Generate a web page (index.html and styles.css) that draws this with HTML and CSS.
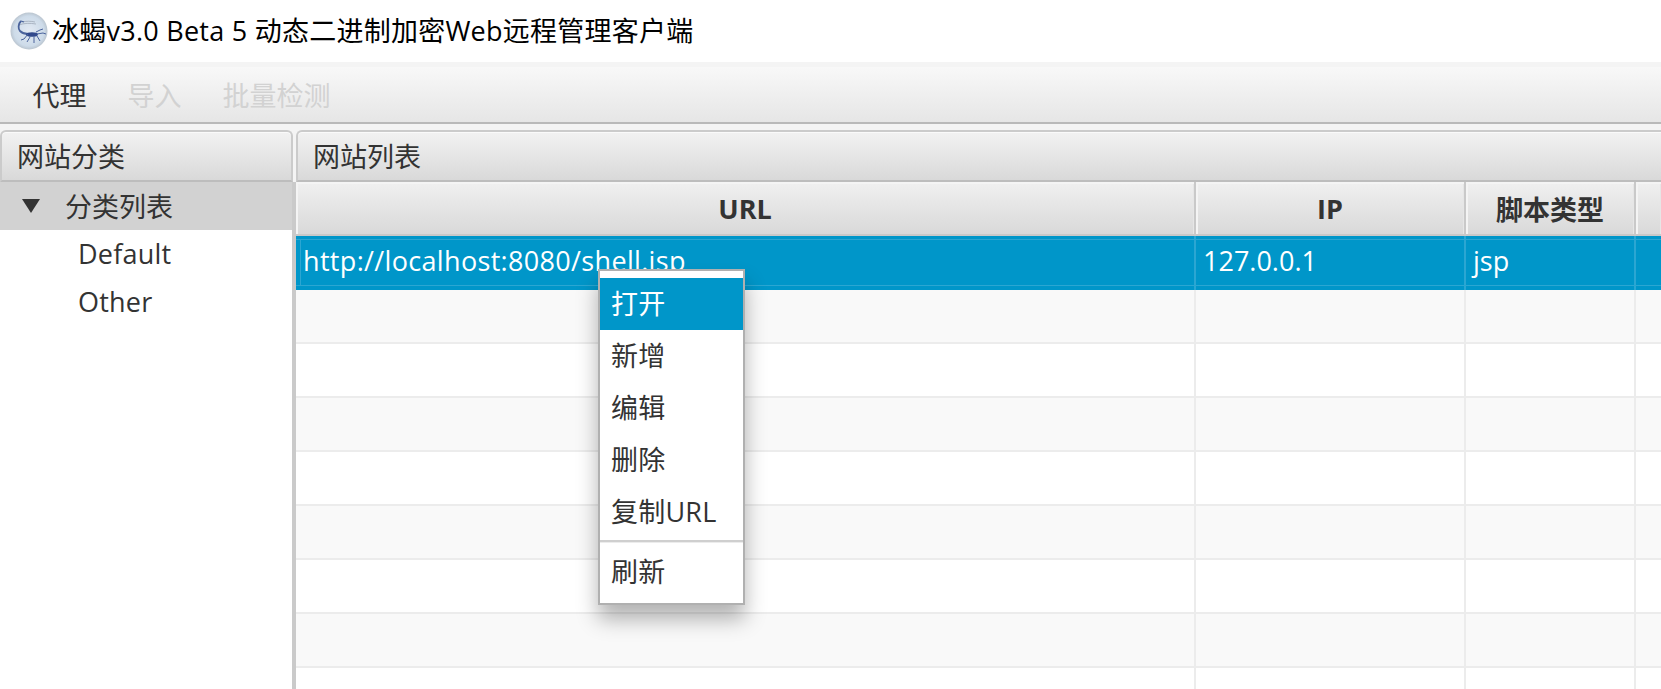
FILE: index.html
```html
<!DOCTYPE html>
<html lang="zh">
<head>
<meta charset="utf-8">
<title>冰蝎</title>
<link rel="stylesheet" href="styles.css">
</head>
<body>
<div class="app">
  <header class="titlebar">
    <svg class="logo" viewBox="0 0 38 38" aria-hidden="true">
      <defs>
        <radialGradient id="lg" cx="50%" cy="50%" r="52%">
          <stop offset="0" stop-color="#e3eaf3"/>
          <stop offset="0.78" stop-color="#cddbe9"/>
          <stop offset="1" stop-color="#b6c0ca"/>
        </radialGradient>
      </defs>
      <circle cx="19" cy="19" r="18.5" fill="url(#lg)"/>
      <path d="M9 13c5-2 11-2 17-1M12 10c4-1 9-1 13 0" stroke="#98a2b0" stroke-width="0.7" fill="none"/>
      <path d="M11 9c-3 3-3 8-1 10 2 2 5 3 8 3" stroke="#4a639c" stroke-width="1.8" fill="none"/>
      <path d="M11 9l3 1" stroke="#4a639c" stroke-width="1.1" fill="none"/>
      <ellipse cx="22" cy="22.5" rx="6" ry="2.3" fill="#31498c"/>
      <path d="M27 22l6-1 3 1M26 20l4-2 3-1M20 25l-3 5M24 25l0 6M27 24l3 5M18 22l-4 5-3 1" stroke="#4a639c" stroke-width="1" fill="none"/>
    </svg>
    <span class="app-title">冰蝎v3.0 Beta 5 动态二进制加密Web远程管理客户端</span>
  </header>

  <nav class="menubar">
    <span class="menu">代理</span>
    <span class="menu menu-off">导入</span>
    <span class="menu menu-off">批量检测</span>
  </nav>

  <main class="panes">
    <section class="pane pane-left">
      <div class="pane-head">网站分类</div>
      <div class="tree">
        <div class="tree-row tree-root"><span class="arrow"></span>分类列表</div>
        <div class="tree-row tree-leaf">Default</div>
        <div class="tree-row tree-leaf">Other</div>
      </div>
    </section>

    <section class="pane pane-right">
      <div class="pane-head pane-head-right">网站列表</div>
      <div class="table">
        <div class="thead">
          <div class="th c-url">URL</div>
          <div class="th c-ip">IP</div>
          <div class="th c-type">脚本类型</div>
          <div class="th c-rest"></div>
        </div>
        <div class="tr tr-sel">
          <div class="td c-url">http://localhost:8080/shell.jsp</div>
          <div class="td c-ip">127.0.0.1</div>
          <div class="td c-type">jsp</div>
          <div class="td c-rest"></div>
        </div>
        <div class="tr tr-odd"><div class="td c-url"></div><div class="td c-ip"></div><div class="td c-type"></div><div class="td c-rest"></div></div>
        <div class="tr"><div class="td c-url"></div><div class="td c-ip"></div><div class="td c-type"></div><div class="td c-rest"></div></div>
        <div class="tr tr-odd"><div class="td c-url"></div><div class="td c-ip"></div><div class="td c-type"></div><div class="td c-rest"></div></div>
        <div class="tr"><div class="td c-url"></div><div class="td c-ip"></div><div class="td c-type"></div><div class="td c-rest"></div></div>
        <div class="tr tr-odd"><div class="td c-url"></div><div class="td c-ip"></div><div class="td c-type"></div><div class="td c-rest"></div></div>
        <div class="tr"><div class="td c-url"></div><div class="td c-ip"></div><div class="td c-type"></div><div class="td c-rest"></div></div>
        <div class="tr tr-odd"><div class="td c-url"></div><div class="td c-ip"></div><div class="td c-type"></div><div class="td c-rest"></div></div>
        <div class="tr"><div class="td c-url"></div><div class="td c-ip"></div><div class="td c-type"></div><div class="td c-rest"></div></div>
      </div>
    </section>
  </main>

  <div class="ctx">
    <div class="ctx-item ctx-active">打开</div>
    <div class="ctx-item">新增</div>
    <div class="ctx-item">编辑</div>
    <div class="ctx-item">删除</div>
    <div class="ctx-item">复制URL</div>
    <div class="ctx-sep"></div>
    <div class="ctx-item ctx-last">刷新</div>
  </div>
</div>
</body>
</html>
```
FILE: styles.css
```css
* { box-sizing: border-box; }
html, body { margin: 0; height: 100%; overflow: hidden; background: #f4f4f4; }
body {
  font-family: "Open Sans", "Noto Sans CJK SC", sans-serif;
  font-size: 27px;
  color: #333;
}
.app { position: relative; width: 1661px; height: 689px; display: flex; flex-direction: column; overflow: hidden; }

.titlebar { height: 62px; background: #fff; display: flex; align-items: center; padding: 0 0 3px 10px; color: #000; flex: none; }
.logo { width: 38px; height: 38px; margin: 3px 4px 0 0; flex: none; }
.app-title { letter-spacing: 0.25px; white-space: nowrap; }

.menubar {
  margin-top: 5px; height: 57px; flex: none;
  padding: 0 0 1px 12px;
  display: flex; align-items: center;
  background: linear-gradient(#f8f8f8, #e6e6e6);
  border-bottom: 2px solid #b9b9b9;
}
.menu { padding: 0 20.5px; color: #333; }
.menu-off { color: #d2d2d2; }

.panes { flex: 1; display: flex; margin-top: 6px; min-height: 0; }
.pane { display: flex; flex-direction: column; min-height: 0; }
.pane-left { width: 296px; flex: none; }
.pane-right { flex: 1; min-width: 0; }

.pane-head {
  height: 52px; flex: none;
  display: flex; align-items: center;
  padding: 0 0 2px 15px;
  background: linear-gradient(#f2f2f2, #d9d9d9);
  border: 2px solid #cbcbcb;
  border-bottom: 2px solid #bdbdbd;
  border-radius: 6px 6px 0 0;
  box-shadow: inset 0 1px 0 #fafafa;
}
.pane-left .pane-head { width: 293px; }
.pane-head-right { border-right: 0; padding-left: 15px; border-radius: 6px 0 0 0; }

.tree { flex: 1; background: #fff; border-right: 4px solid #cacaca; }
.tree-row { height: 48px; display: flex; align-items: center; padding-bottom: 2px; }
.tree-root { background: #d2d2d2; padding-left: 22px; }
.arrow { width: 0; height: 0; border-left: 9px solid transparent; border-right: 9px solid transparent; border-top: 14px solid #333; margin: 2px 25px 0 0; }
.tree-leaf { padding-left: 78px; letter-spacing: 0.2px; }

.table { flex: 1; background: #fff; min-height: 0; }
.thead { height: 54px; display: flex; background: linear-gradient(#f0f0f0, #d9d9d9); border-bottom: 2px solid #c9c9c9; }
.th { display: flex; align-items: center; justify-content: center; font-weight: 700; border-right: 2px solid #c9c9c9; box-shadow: inset 2px 2px 0 #f4f4f4, inset -1px 0 0 #e6e6e6; }
.c-url { width: 900px; flex: none; }
.c-ip { width: 270px; flex: none; }
.c-type { width: 170px; flex: none; }
.c-rest { flex: 1; }
.th.c-rest { border-right: 0; }

.tr { height: 54px; display: flex; background: #fff; border-bottom: 2px solid #ececec; }
.tr-odd { background: #f9f9f9; }
.td { display: flex; align-items: center; padding: 0 0 5px 7px; border-right: 2px solid #ececec; white-space: nowrap; }
.td.c-rest { border-right: 0; }
.tr-sel { background: #0096c9; color: #fff; height: 54px; border: 0; box-shadow: inset 0 3px 0 #0096c9, inset 0 4px 0 #2ba6d2, inset 0 -4px 0 #0096c9, inset 0 -5px 0 #2ba6d2, inset 4px 0 0 #0096c9, inset 5px 0 0 #2ba6d2; }
.tr-sel .td { border-right-color: #2ba6d2; }
.tr-sel .c-url { letter-spacing: 0.33px; }

.ctx {
  position: absolute; left: 598px; top: 269px; width: 147px;
  background: #fff; border: 2px solid #b0b0b0;
  padding-top: 7px;
  box-shadow: 0 14px 20px rgba(0, 0, 0, 0.3);
}
.ctx-item { height: 52px; padding: 0 0 3px 11px; display: flex; align-items: center; color: #333; letter-spacing: 0.2px; }
.ctx-active { background: #0096c9; color: #fff; }
.ctx-sep { height: 3px; margin-top: 2px; background: linear-gradient(#cfcfcf 66%, #ececec 66%); }
.ctx-last { height: 60px; padding-bottom: 6px; }
```
